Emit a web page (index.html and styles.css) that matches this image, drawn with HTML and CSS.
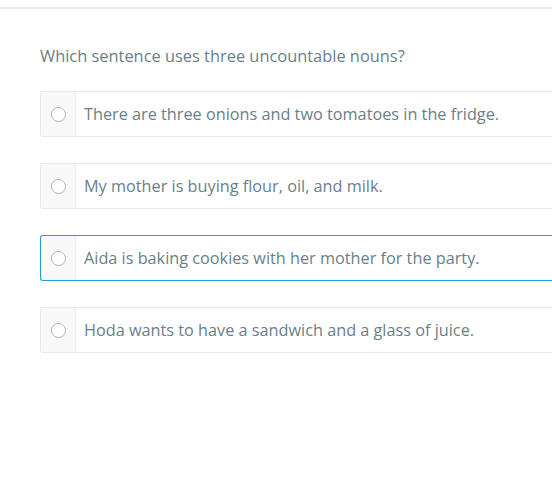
FILE: index.html
```html
<!DOCTYPE html>
<html>
<head>
<meta charset="utf-8">
<link rel="stylesheet" href="styles.css">
</head>
<body>
<div class="topbar"></div>
<main class="quiz">
  <p class="question">Which sentence uses three uncountable nouns?</p>
  <div class="options">
    <label class="option">
      <span class="radio-cell"><span class="radio"></span></span>
      <span class="text">There are three onions and two tomatoes in the fridge.</span>
    </label>
    <label class="option">
      <span class="radio-cell"><span class="radio"></span></span>
      <span class="text">My mother is buying flour, oil, and milk.</span>
    </label>
    <label class="option focused">
      <span class="radio-cell"><span class="radio"></span></span>
      <span class="text">Aida is baking cookies with her mother for the party.</span>
    </label>
    <label class="option">
      <span class="radio-cell"><span class="radio"></span></span>
      <span class="text">Hoda wants to have a sandwich and a glass of juice.</span>
    </label>
  </div>
</main>
</body>
</html>
```
FILE: styles.css
```css
html, body {
  margin: 0;
  padding: 0;
  background: #fff;
  overflow: hidden;
}
body {
  font-family: "Open Sans", "Liberation Sans", sans-serif;
  color: #6a7f89;
  width: 552px;
  height: 503px;
}
.topbar {
  margin-top: 7px;
  height: 2px;
  background: #ebebeb;
}
.quiz {
  padding-left: 40px;
}
.question {
  margin: 0;
  padding-top: 35px;
  font-size: 16.4px;
  line-height: 24px;
}
.options {
  margin-top: 23px;
  display: flex;
  flex-direction: column;
  gap: 26px;
}
.option {
  display: flex;
  align-items: stretch;
  height: 44px;
  border: 1px solid #e9e9e9;
  border-right: none;
  border-radius: 3px 0 0 3px;
  background: #fff;
}
.option.focused {
  border-color: #1aa1d6;
}
.radio-cell {
  width: 34px;
  flex: none;
  display: flex;
  align-items: center;
  justify-content: center;
  background: #f9f9f9;
  border-right: 1px solid #ececec;
  border-radius: 3px 0 0 3px;
}
.radio {
  width: 13px;
  height: 13px;
  border: 1px solid #b4b4b4;
  border-radius: 50%;
  background: #fff;
}
.text {
  display: flex;
  align-items: center;
  padding-left: 8px;
  font-size: 16.25px;
  white-space: nowrap;
}
```
